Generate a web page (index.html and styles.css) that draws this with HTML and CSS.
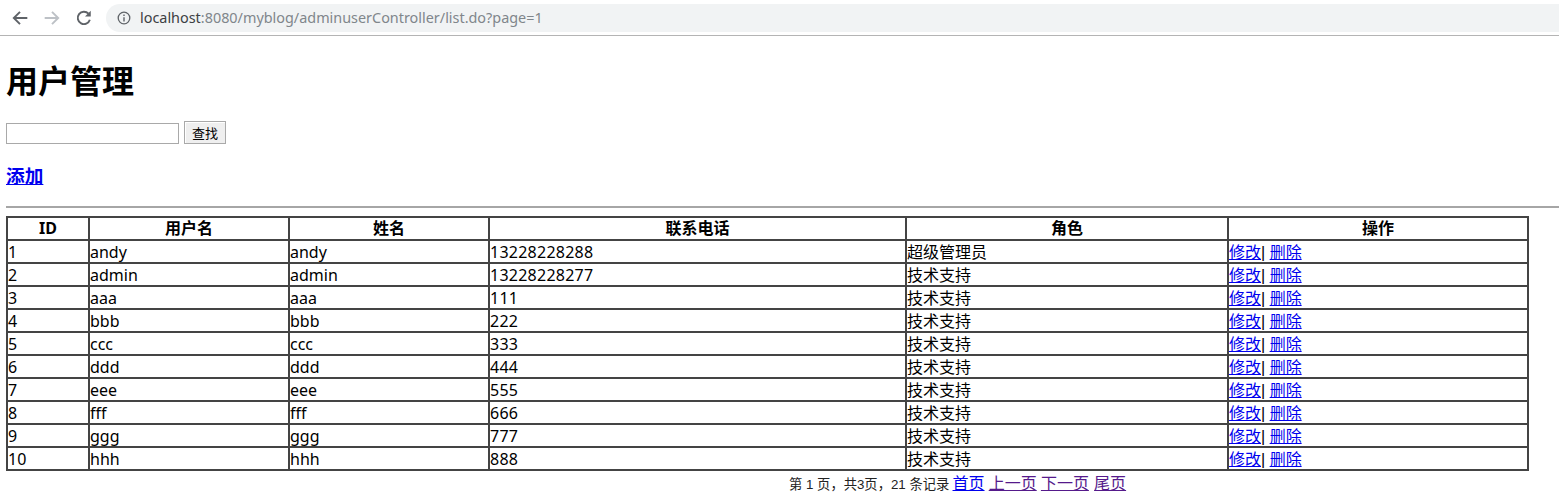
FILE: index.html
```html
<!DOCTYPE html>
<html lang="zh-CN">
<head>
    <meta charset="UTF-8">
    <title>用户管理</title>
    <link rel="stylesheet" href="styles.css">
</head>
<body>

    <!-- Browser toolbar -->
    <div class="toolbar">
        <svg class="nav-icon" viewBox="0 0 16 16"><path d="M14.5 8H2.5M8 2.5L2.5 8L8 13.5" fill="none" stroke="#5f6368" stroke-width="1.7"/></svg>
        <svg class="nav-icon" viewBox="0 0 16 16"><path d="M1.5 8H13.5M8 2.5L13.5 8L8 13.5" fill="none" stroke="#bdc1c6" stroke-width="1.7"/></svg>
        <svg class="nav-icon" viewBox="0 0 16 16"><path d="M13.2 9.6A5.5 5.5 0 1 1 12 4.2" fill="none" stroke="#5f6368" stroke-width="1.7"/><path d="M14 1.5V6.6H8.9Z" fill="#5f6368"/></svg>
        <div class="address">
            <svg class="info-icon" viewBox="0 0 14 14"><circle cx="7" cy="7" r="5.8" fill="none" stroke="#5f6368" stroke-width="1.3"/><path d="M6.3 6.2H7.7V10.4H6.3ZM6.3 3.6H7.7V5H6.3Z" fill="#5f6368"/></svg>
            <span class="host">localhost</span><span class="path">:8080/myblog/adminuserController/list.do?page=1</span>
        </div>
    </div>

    <!-- Main content -->
    <div class="page">
        <h1>用户管理</h1>

        <form class="search">
            <input type="text" class="search-input">
            <button type="button" class="search-btn">查找</button>
        </form>

        <h3 class="add"><a href="#">添加</a></h3>

        <hr>

        <table class="table">
            <colgroup>
                <col class="col-id">
                <col class="col-user">
                <col class="col-name">
                <col class="col-phone">
                <col class="col-role">
                <col class="col-op">
            </colgroup>
            <thead>
                <tr>
                    <th>ID</th>
                    <th>用户名</th>
                    <th>姓名</th>
                    <th>联系电话</th>
                    <th>角色</th>
                    <th>操作</th>
                </tr>
            </thead>
            <tbody>
                <tr><td>1</td><td>andy</td><td>andy</td><td class="phone">13228228288</td><td>超级管理员</td><td><a href="#">修改</a><span class="sep">| </span><a href="#">删除</a></td></tr>
                <tr><td>2</td><td>admin</td><td>admin</td><td class="phone">13228228277</td><td>技术支持</td><td><a href="#">修改</a><span class="sep">| </span><a href="#">删除</a></td></tr>
                <tr><td>3</td><td>aaa</td><td>aaa</td><td class="phone">111</td><td>技术支持</td><td><a href="#">修改</a><span class="sep">| </span><a href="#">删除</a></td></tr>
                <tr><td>4</td><td>bbb</td><td>bbb</td><td class="phone">222</td><td>技术支持</td><td><a href="#">修改</a><span class="sep">| </span><a href="#">删除</a></td></tr>
                <tr><td>5</td><td>ccc</td><td>ccc</td><td class="phone">333</td><td>技术支持</td><td><a href="#">修改</a><span class="sep">| </span><a href="#">删除</a></td></tr>
                <tr><td>6</td><td>ddd</td><td>ddd</td><td class="phone">444</td><td>技术支持</td><td><a href="#">修改</a><span class="sep">| </span><a href="#">删除</a></td></tr>
                <tr><td>7</td><td>eee</td><td>eee</td><td class="phone">555</td><td>技术支持</td><td><a href="#">修改</a><span class="sep">| </span><a href="#">删除</a></td></tr>
                <tr><td>8</td><td>fff</td><td>fff</td><td class="phone">666</td><td>技术支持</td><td><a href="#">修改</a><span class="sep">| </span><a href="#">删除</a></td></tr>
                <tr><td>9</td><td>ggg</td><td>ggg</td><td class="phone">777</td><td>技术支持</td><td><a href="#">修改</a><span class="sep">| </span><a href="#">删除</a></td></tr>
                <tr><td>10</td><td>hhh</td><td>hhh</td><td class="phone">888</td><td>技术支持</td><td><a href="#">修改</a><span class="sep">| </span><a href="#">删除</a></td></tr>
            </tbody>
        </table>

        <div class="pager">
            <span class="pager-info">第 1 页，共3页，21 条记录</span>
            <a href="#">首页</a>
            <a href="#" class="visited">上一页</a>
            <a href="#" class="visited">下一页</a>
            <a href="#" class="visited last">尾页</a>
        </div>
    </div>

</body>
</html>
```

FILE: styles.css
```css
/* General Styles */
body {
    margin: 0;
    padding: 0;
    background: white;
    color: black;
    font-family: "Noto Sans", "Noto Sans CJK SC", sans-serif;
    font-size: 16px;
    overflow: hidden;
}

a {
    color: #0000ee;
}

/* Browser toolbar */
.toolbar {
    display: flex;
    align-items: center;
    height: 35px;
    border-bottom: 1px solid #b4b4b4;
    box-sizing: content-box;
    padding-left: 11px;
}

.nav-icon {
    width: 18px;
    height: 18px;
    margin-right: 14px;
    flex-shrink: 0;
}

.address {
    display: flex;
    align-items: center;
    flex: 1;
    height: 28px;
    margin-left: -1px;
    padding-left: 11px;
    background: #f1f3f4;
    border-radius: 14px 0 0 14px;
    font-size: 14.4px;
}

.info-icon {
    width: 14px;
    height: 14px;
    margin-right: 9px;
}

.host {
    color: #3c4043;
}

.path {
    color: #80868b;
}

/* Main content */
.page {
    padding-left: 6px;
}

h1 {
    margin: 0;
    padding-top: 25px;
    font-size: 32px;
    line-height: 40px;
    height: 61px;
}

.search {
    display: flex;
    align-items: flex-end;
    height: 22px;
}

.search-input {
    width: 173px;
    height: 21px;
    padding: 0;
    margin: 0 5px 0 0;
    border: 1px solid #a9a9a9;
    box-sizing: border-box;
}

.search-btn {
    width: 42px;
    height: 23px;
    padding: 0;
    font-family: "Noto Sans CJK SC", sans-serif;
    font-size: 13px;
    color: black;
    background: #efefef;
    border: 1px solid #a9a9a9;
    box-shadow: inset 1px 1px 0 #fff;
}

.add {
    margin: 0;
    padding-top: 20px;
    font-size: 18.7px;
    line-height: 24px;
    height: 42px;
}

hr {
    margin: 0 0 8px 0;
    height: 0;
    border: none;
    border-top: 2px solid #a6a6a6;
}

/* Table */
.table {
    width: 1521px;
    border-collapse: collapse;
    table-layout: fixed;
}

.col-id { width: 82px; }
.col-user { width: 200px; }
.col-name { width: 200px; }
.col-phone { width: 417px; }
.col-role { width: 322px; }
.col-op { width: 300px; }

.table th,
.table td {
    border: 2px solid #444;
    padding: 0;
    height: 21px;
    line-height: 21px;
    font-size: 16px;
    white-space: nowrap;
}

.table th {
    text-align: center;
    font-weight: bold;
}

.table td {
    text-align: left;
    padding-top: 2px;
    height: 19px;
    line-height: 19px;
}

.phone {
    letter-spacing: 0.25px;
}

.sep {
    font-family: "Liberation Sans", sans-serif;
}

/* Pager */
.pager {
    padding-left: 782px;
    height: 24px;
    line-height: 24px;
    font-size: 16px;
}

.pager-info {
    font-family: "Liberation Sans", "Noto Sans CJK SC", sans-serif;
    font-size: 13.3px;
    color: #222;
    margin-left: 1px;
    margin-right: -1px;
}

.pager .last {
    margin-left: 1px;
}

.pager .visited {
    color: #551a8b;
}
```
